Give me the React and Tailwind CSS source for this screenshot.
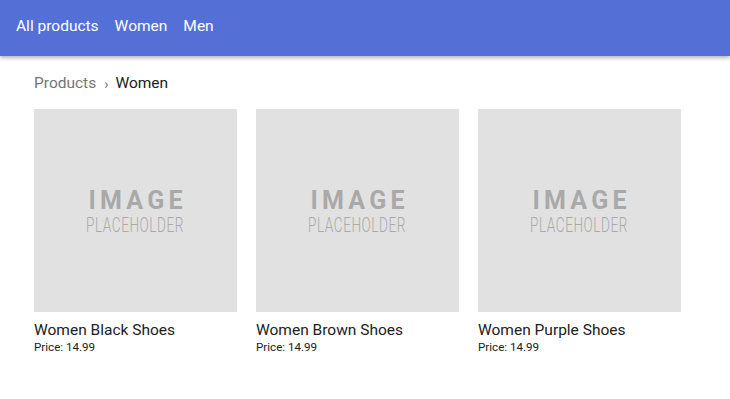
import React from 'react';

const products = [
  { id: 1, name: 'Women Black Shoes', price: '14.99' },
  { id: 2, name: 'Women Brown Shoes', price: '14.99' },
  { id: 3, name: 'Women Purple Shoes', price: '14.99' },
];

const Placeholder = () => (
  <div className="w-[203px] h-[203px] bg-[#e1e1e1] flex flex-col items-center justify-center text-[#a9a9a9]">
    <div className="text-[25px] font-bold tracking-[0.17em] leading-[20px] pl-[0.17em] mt-[2px]">IMAGE</div>
    <div className="text-[20px] font-light leading-[16px] mt-[6px] scale-x-[0.68] tracking-[0.04em] whitespace-nowrap">PLACEHOLDER</div>
  </div>
);

export default function App() {
  return (
    <div className="min-h-[399px] bg-white font-['Roboto',sans-serif]">
      {/* Top navigation */}
      <nav className="h-[56px] bg-[#546fd6] shadow-[0_2px_4px_rgba(0,0,0,0.3)] flex items-center px-4 pb-[2px] gap-4 text-white text-[15.5px]">
        <a>All products</a>
        <a>Women</a>
        <a>Men</a>
      </nav>

      <main className="px-[34px]">
        {/* Breadcrumb */}
        <div className="flex items-center h-[53px] pt-[3px] text-[15.5px]">
          <span className="text-[#757575]">Products</span>
          <span className="text-[#757575] text-[14px] ml-[8px] mr-[7px]">›</span>
          <span className="text-[#212121]">Women</span>
        </div>

        {/* Product grid */}
        <div className="flex gap-[19px]">
          {products.map(p => (
            <div key={p.id} className="w-[203px]">
              <Placeholder />
              <div className="text-[15.5px] text-[#212121] mt-[8px] leading-[20px]">{p.name}</div>
              <div className="text-[11.6px] text-[#212121] leading-[14px]">Price: {p.price}</div>
            </div>
          ))}
        </div>
      </main>
    </div>
  );
}
